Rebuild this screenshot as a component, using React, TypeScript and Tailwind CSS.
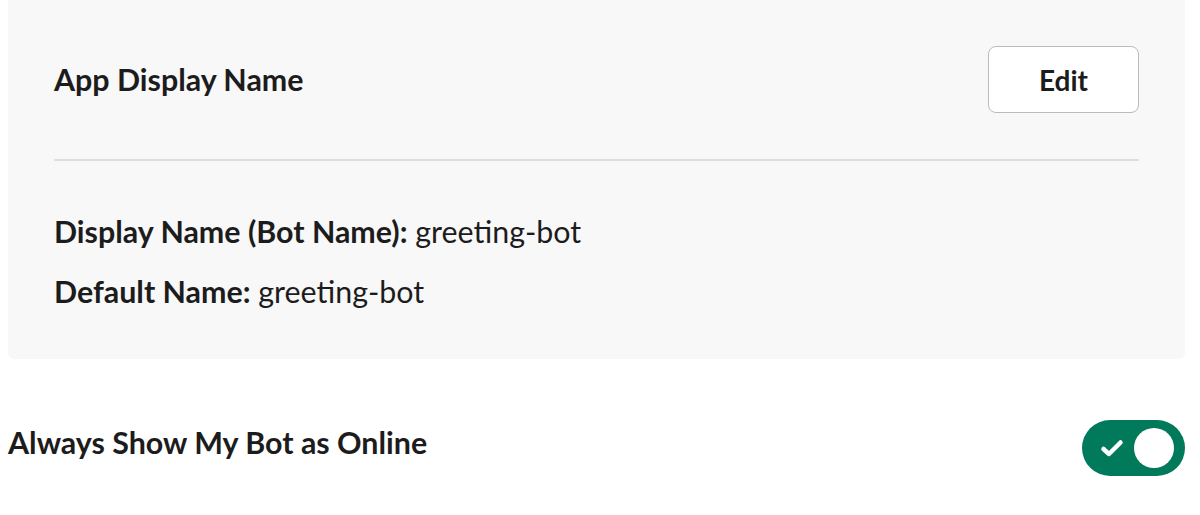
const font = { fontFamily: "Lato, 'Noto Sans', sans-serif" };

const Toggle = () => (
  <div className="w-[103px] h-[56px] rounded-full bg-[#007a5a] flex items-center justify-between pl-[18px] pr-[11px]">
    <svg width="24" height="19" viewBox="0 0 24 19" fill="none">
      <path d="M3.5 10 L9 15 L20.5 3.5" stroke="white" strokeWidth="4.5" strokeLinecap="round" strokeLinejoin="round" />
    </svg>
    <div className="w-[40px] h-[40px] rounded-full bg-white" />
  </div>
);

export default function App() {
  return (
    <div className="w-[1200px] h-[515px] bg-white text-[#1d1c1d] pl-[8px] pr-[15px]" style={font}>
      {/* App display name card */}
      <section className="bg-[#f8f8f8] rounded-b-[6px] h-[359px] px-[46px] pt-[46px]">
        <div className="flex items-center justify-between">
          <h2 className="text-[30.4px] font-bold">App Display Name</h2>
          <button className="w-[151px] h-[67px] bg-white border border-[#bbbbbb] rounded-[8px] text-[28px] font-bold">
            Edit
          </button>
        </div>
        <div className="mt-[46px] border-t-2 border-[#dddddd]" />
        <div className="mt-[52px] flex flex-col gap-[24px] text-[30.4px] leading-[36px]">
          <p>
            <span className="font-bold">Display Name (Bot Name):</span> greeting-bot
          </p>
          <p>
            <span className="font-bold">Default Name:</span> greeting-bot
          </p>
        </div>
      </section>

      {/* Online toggle row */}
      <div className="flex items-center justify-between mt-[61px]">
        <span className="text-[30.4px] font-bold pb-[10px]">Always Show My Bot as Online</span>
        <Toggle />
      </div>
    </div>
  );
}
